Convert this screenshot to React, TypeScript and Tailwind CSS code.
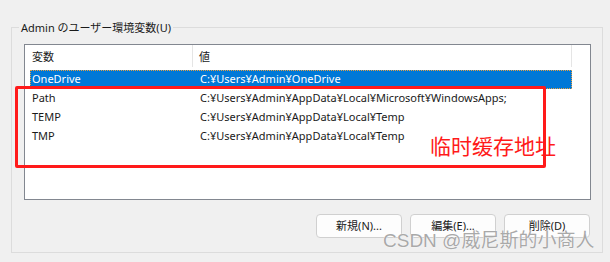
import React from "react";

const rows = [
  { name: "OneDrive", value: "C:¥Users¥Admin¥OneDrive", selected: true },
  { name: "Path", value: "C:¥Users¥Admin¥AppData¥Local¥Microsoft¥WindowsApps;" },
  { name: "TEMP", value: "C:¥Users¥Admin¥AppData¥Local¥Temp" },
  { name: "TMP", value: "C:¥Users¥Admin¥AppData¥Local¥Temp" },
];

export default function App() {
  return (
    <div
      className="relative w-[610px] h-[262px] overflow-hidden bg-[#f0f0f0] pt-[27px] pl-[11px] text-[11px] text-[#1a1a1a]"
      style={{ fontFamily: '"Noto Sans", "Noto Sans CJK JP", sans-serif' }}
    >
      <div className="relative flex h-[226px] w-[592px] flex-col border border-[#dcdcdc] pl-[12px] pr-[11px] pt-[16px]">
        <span className="absolute left-[7px] top-[-8px] bg-[#f0f0f0] px-[2px] leading-[16px]">
          Admin のユーザー環境変数(U)
        </span>
        <div className="flex h-[156px] w-[567px] flex-col border border-[#828790] bg-white">
          <div className="flex h-[25px] items-center">
            <div className="flex h-[22px] w-[168px] items-center self-start border-r border-[#e5e5e5] pl-[7px] pt-[3px]">
              変数
            </div>
            <div className="flex h-[22px] w-[379px] items-center self-start border-r border-[#e5e5e5] pl-[6px] pt-[3px]">
              値
            </div>
          </div>
          <div className="ml-[5px] flex w-[542px] flex-col">
            {rows.map((r) => (
              <div
                key={r.name}
                className={
                  r.selected
                    ? "flex h-[19px] items-center bg-[#0078d7] text-white outline-1 -outline-offset-1 outline-dotted outline-[#e8a040]"
                    : "flex h-[19px] items-center"
                }
              >
                <span className="w-[170px] pl-[2px] whitespace-nowrap">{r.name}</span>
                <span className="whitespace-nowrap">{r.value}</span>
              </div>
            ))}
          </div>
        </div>
        <div className="mt-[14px] mr-[1px] flex justify-end gap-[8px]">
          {["新規(N)...", "編集(E)...", "削除(D)"].map((b) => (
            <button
              key={b}
              className="flex h-[24px] w-[86px] items-center justify-center rounded-[4px] border border-[#d0d0d0] bg-[#fdfdfd] text-[#1a1a1a]"
            >
              {b}
            </button>
          ))}
        </div>
      </div>

      <div className="pointer-events-none absolute left-[15px] top-[86px] h-[82px] w-[531px] rounded-[2px] border-[3px] border-[#ff1a1a]" />
      <div
        className="pointer-events-none absolute left-[430px] top-[135px] text-[21px] leading-none text-[#ff1a1a]"
        style={{ fontFamily: '"Noto Sans CJK SC", sans-serif' }}
      >
        临时缓存地址
      </div>
      <div
        className="pointer-events-none absolute left-[383px] top-[231px] whitespace-nowrap text-[19px] leading-none text-[#a9a9a9] [text-shadow:0_0_1px_#ffffff,0_0_1px_#ffffff]"
        style={{ fontFamily: '"Liberation Sans", "Noto Sans CJK SC", sans-serif' }}
      >
        CSDN @威尼斯的小商人
      </div>
    </div>
  );
}
